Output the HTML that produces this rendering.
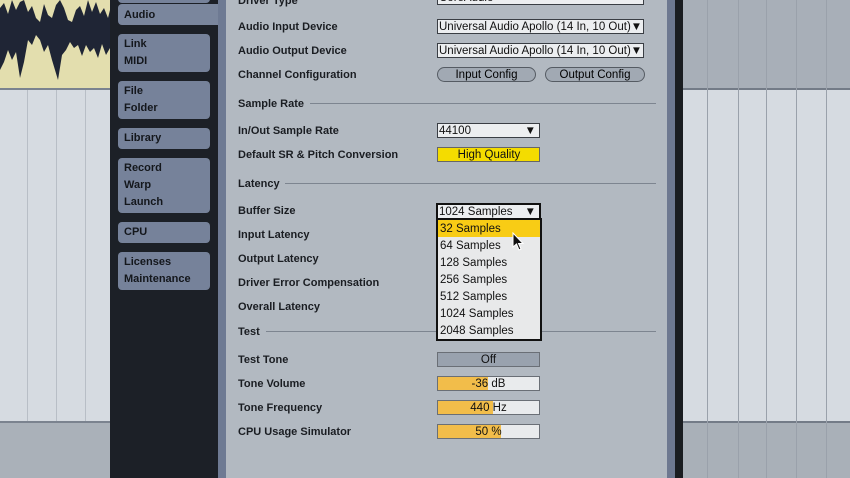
<!DOCTYPE html><html><head><style>
body{margin:0;width:850px;height:478px;overflow:hidden;position:relative;background:#d4d9df;font-family:"Liberation Sans",Arial,sans-serif}
.a{position:absolute}
.lbl{position:absolute;left:238px;font-size:11px;font-weight:bold;color:#1a1d22}
.tab{position:absolute;left:118px;width:92px;background:#76829a;border-radius:4px;font-size:11px;font-weight:bold;color:#14171c;line-height:17px;padding-left:6px;box-sizing:border-box}
.box{position:absolute;left:437px;height:13px;border:1px solid #3a3e44;background:#eceef0;font-size:11.5px;line-height:14px;color:#111;box-sizing:content-box;white-space:nowrap;overflow:hidden;padding-left:1px}
.sec{position:absolute;left:238px;font-size:11px;font-weight:bold;color:#1a1d22}
.ln{position:absolute;height:1px;background:#7d8590;right:194px}
.bar{position:absolute;left:437px;width:101px;height:13px;border:1px solid #6a6f76;background:#e9ebed;font-size:11.5px;line-height:14px;text-align:center;color:#111}
.bar i{position:absolute;left:0;top:0;bottom:0;background:#f2bd4a}
.bar span{position:relative}
.opt{height:17px;line-height:18px;padding-left:2px;font-size:11.5px}
</style></head><body>
<!-- left area -->
<div class="a" style="left:0;top:0;width:110px;height:88px;background:#e3deae"></div>
<svg class="a" style="left:0;top:0" width="110" height="88"><path d="M0 8 L4 3 L8 14 L12 0 L16 10 L20 2 L24 0 L28 12 L32 6 L36 18 L40 22 L44 4 L48 15 L52 18 L56 5 L60 0 L64 8 L68 20 L72 22 L76 10 L80 6 L84 16 L88 0 L92 12 L96 2 L100 14 L104 8 L108 18 L110 10 L110 48 L106 55 L102 44 L98 58 L94 48 L90 52 L86 45 L82 56 L78 45 L74 48 L70 42 L66 50 L62 55 L58 80 L55 70 L52 60 L48 45 L44 52 L40 40 L36 35 L32 45 L28 40 L24 62 L20 78 L16 52 L12 60 L8 50 L4 62 L0 70 Z" fill="#1f2535"/></svg>
<div class="a" style="left:0;top:88px;width:110px;height:2px;background:#7b838f"></div>
<div class="a" style="left:0;top:90px;width:110px;height:332px;background:#d6dbe1"></div>
<div class="a" style="left:27px;top:90px;width:1px;height:388px;background:#b8bec6"></div>
<div class="a" style="left:56px;top:90px;width:1px;height:388px;background:#b8bec6"></div>
<div class="a" style="left:85px;top:90px;width:1px;height:388px;background:#b8bec6"></div>
<div class="a" style="left:0;top:421px;width:110px;height:2px;background:#7b838f"></div>
<div class="a" style="left:0;top:423px;width:110px;height:55px;background:#aab1b9"></div>
<!-- sidebar -->
<div class="a" style="left:110px;top:0;width:108px;height:478px;background:#1c2027"></div>
<div class="a" style="left:218px;top:0;width:8px;height:478px;background:#6e7a93"></div>
<div class="a" style="left:118px;top:-6px;width:92px;height:9px;background:#76829a;border-radius:4px"></div>
<div class="tab" style="top:4px;height:21px;width:100px;border-radius:4px 0 0 4px;background:#7a869d;padding-top:3px">Audio</div>
<div class="tab" style="top:34px;height:38px;padding-top:2px">Link<br>MIDI</div>
<div class="tab" style="top:81px;height:38px;padding-top:2px">File<br>Folder</div>
<div class="tab" style="top:128px;height:21px;padding-top:2px">Library</div>
<div class="tab" style="top:158px;height:55px;padding-top:2px">Record<br>Warp<br>Launch</div>
<div class="tab" style="top:222px;height:21px;padding-top:2px">CPU</div>
<div class="tab" style="top:252px;height:38px;padding-top:2px">Licenses<br>Maintenance</div>
<!-- main panel -->
<div class="a" style="left:226px;top:0;width:441px;height:478px;background:#b2b9c1"></div>
<div class="a" style="left:667px;top:0;width:8px;height:478px;background:#6d7890"></div>
<div class="a" style="left:675px;top:0;width:8px;height:478px;background:#1a1d21"></div>
<!-- right area -->
<div class="a" style="left:683px;top:0;width:167px;height:88px;background:#a8afb8"></div>
<div class="a" style="left:683px;top:88px;width:167px;height:2px;background:#737b87"></div>
<div class="a" style="left:683px;top:90px;width:167px;height:332px;background:#d6dbe1"></div>
<div class="a" style="left:683px;top:421px;width:167px;height:2px;background:#737b87"></div>
<div class="a" style="left:683px;top:423px;width:167px;height:55px;background:#a9b0b8"></div>
<div class="a" style="left:707px;top:0;width:1px;height:478px;background:#9aa1ab"></div>
<div class="a" style="left:738px;top:0;width:1px;height:478px;background:#9aa1ab"></div>
<div class="a" style="left:766px;top:0;width:1px;height:478px;background:#9aa1ab"></div>
<div class="a" style="left:796px;top:0;width:1px;height:478px;background:#9aa1ab"></div>
<div class="a" style="left:826px;top:0;width:1px;height:478px;background:#9aa1ab"></div>

<div class="lbl" style="top:-5px">Driver Type</div>
<div class="box" style="top:-10px;width:204px">CoreAudio</div>
<div class="lbl" style="top:21px">Audio Input Device</div>
<div class="box" style="top:19px;width:204px">Universal Audio Apollo (14 In, 10 Out)&#9660;</div>
<div class="lbl" style="top:45px">Audio Output Device</div>
<div class="box" style="top:43px;width:204px">Universal Audio Apollo (14 In, 10 Out)&#9660;</div>
<div class="lbl" style="top:69px">Channel Configuration</div>
<div class="a" style="left:437px;top:67px;width:97px;height:13px;border:1px solid #555b63;border-radius:8px;background:#a1a9b3;font-size:11.5px;line-height:14px;text-align:center">Input Config</div>
<div class="a" style="left:545px;top:67px;width:98px;height:13px;border:1px solid #555b63;border-radius:8px;background:#a1a9b3;font-size:11.5px;line-height:14px;text-align:center">Output Config</div>
<div class="sec" style="top:98px">Sample Rate</div><div class="ln" style="left:310px;top:103px"></div>
<div class="lbl" style="top:125px">In/Out Sample Rate</div>
<div class="box" style="top:123px;width:100px">44100<span style="position:absolute;right:3px">&#9660;</span></div>
<div class="lbl" style="top:149px">Default SR &amp; Pitch Conversion</div>
<div class="box" style="top:147px;width:100px;background:#f4dc00;text-align:center;border-color:#666">High Quality</div>
<div class="sec" style="top:178px">Latency</div><div class="ln" style="left:285px;top:183px"></div>
<div class="lbl" style="top:205px">Buffer Size</div>
<div class="lbl" style="top:229px">Input Latency</div>
<div class="lbl" style="top:253px">Output Latency</div>
<div class="lbl" style="top:277px">Driver Error Compensation</div>
<div class="lbl" style="top:301px">Overall Latency</div>
<div class="sec" style="top:326px">Test</div><div class="ln" style="left:266px;top:331px"></div>
<div class="lbl" style="top:354px">Test Tone</div>
<div class="bar" style="top:352px;background:#99a2ae">Off</div>
<div class="lbl" style="top:378px">Tone Volume</div>
<div class="bar" style="top:376px"><i style="width:50px"></i><span>-36 dB</span></div>
<div class="lbl" style="top:402px">Tone Frequency</div>
<div class="bar" style="top:400px"><i style="width:55px"></i><span>440 Hz</span></div>
<div class="lbl" style="top:426px">CPU Usage Simulator</div>
<div class="bar" style="top:424px"><i style="width:63px"></i><span>50 %</span></div>
<!-- dropdown -->
<div class="box" style="top:203px;width:100px;border:2px solid #111;left:436px">1024 Samples<span style="position:absolute;right:3px">&#9660;</span></div>
<div class="a" style="left:436px;top:218px;width:102px;height:119px;border:2px solid #111;background:#e8e9ea;color:#111">
<div class="opt" style="background:#f8cc15">32 Samples</div>
<div class="opt">64 Samples</div>
<div class="opt">128 Samples</div>
<div class="opt">256 Samples</div>
<div class="opt">512 Samples</div>
<div class="opt">1024 Samples</div>
<div class="opt">2048 Samples</div>
</div>
<svg class="a" style="left:512px;top:232px" width="14" height="20"><path d="M1 1 L1 15 L4.5 12 L7 18 L9 17 L6.5 11.5 L11 11.5 Z" fill="#111" stroke="#fff" stroke-width="1"/></svg>
</body></html>
